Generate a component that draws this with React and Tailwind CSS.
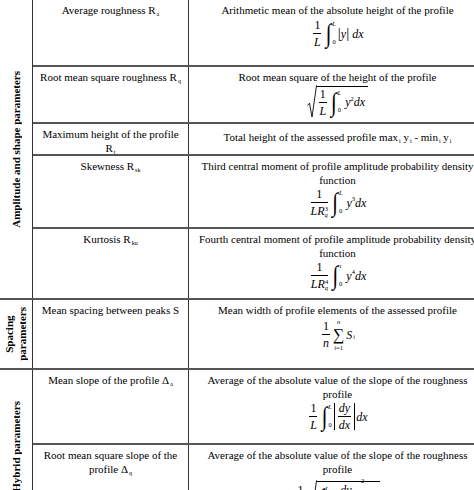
import React from 'react';

const serif = "font-['Liberation_Serif','Times_New_Roman',serif]";

function Sub({children}) {
    return <sub className="text-[6px] relative top-[2px] ml-[1px]">{children}</sub>;
}

function Frac({num, den}) {
    return (
        <span className="inline-flex flex-col items-center leading-none mx-[2px]">
            <span className="px-[1px] pb-[2px] text-[12px] not-italic">{num}</span>
            <span className="border-t border-black w-full text-center pt-[2px] text-[12px]">{den}</span>
        </span>
    );
}

function Int({lo = '0', hi = 'L'}) {
    return (
        <span className="inline-flex items-center mx-[2px]">
            <span className="text-[21px] leading-none italic scale-y-125 inline-block">∫</span>
            <span className="inline-flex flex-col justify-between h-[25px] text-[6.5px] leading-none ml-[1px] not-italic">
                <i>{hi}</i>
                <span className="pb-[1px]">{lo}</span>
            </span>
        </span>
    );
}

function Sqrt({children, h = 30}) {
    return (
        <span className="inline-flex items-stretch">
            <svg width="10" height={h} viewBox={`0 0 10 ${h}`} className="shrink-0">
                <path d={`M0.5 ${h * 0.62} L2.5 ${h * 0.55} L5 ${h - 1} L9.5 0.6 L10 0.6`} fill="none" stroke="black" strokeWidth="0.9"/>
            </svg>
            <span className="border-t border-black inline-flex items-center pr-[3px] mt-[0.5px]">{children}</span>
        </span>
    );
}

function Formula({children, className = ''}) {
    return <div className={`flex items-center justify-center italic text-[12px] ${className}`}>{children}</div>;
}

function Row({first, h, left, children}) {
    return (
        <div className={`flex ${first ? '' : 'border-t-2 border-[#555]'}`} style={{height: h}}>
            <div className="w-[156px] shrink-0 border-r border-[#333] text-center px-1 pt-[3px]">{left}</div>
            <div className="flex-1 text-center px-1 pt-[3px]">{children}</div>
        </div>
    );
}

function Group({label, first, children}) {
    return (
        <div className={`flex ${first ? '' : 'border-t-2 border-[#555]'}`}>
            <div className="w-[33px] shrink-0 border-r border-[#333] flex items-center justify-center">
                <div className="[writing-mode:vertical-rl] rotate-180 font-bold text-[11px] leading-[13px] text-center whitespace-nowrap">
                    {label}
                </div>
            </div>
            <div className="flex-1 flex flex-col">{children}</div>
        </div>
    );
}

export default function App() {
    return (
        <div className={`w-[474px] h-[490px] overflow-hidden bg-white text-black ${serif}`}>
            <div className="w-[486px] text-[11px] leading-[14px]">
                <Group first label="Amplitude and shape parameters">
                    <Row first h={65} left={<>Average roughness R<Sub>a</Sub></>}>
                        <div>Arithmetic mean of the absolute height of the profile</div>
                        <Formula className="mt-[2px]">
                            <Frac num="1" den={<i>L</i>}/>
                            <Int/>
                            <span className="not-italic text-[15px] leading-none">|</span><i>y</i><span className="not-italic text-[15px] leading-none">|</span>
                            <i className="ml-[3px]">dx</i>
                        </Formula>
                    </Row>
                    <Row h={57} left={<>Root mean square roughness R<Sub>q</Sub></>}>
                        <div>Root mean square of the height of the profile</div>
                        <Formula className="mt-[1px]">
                            <Sqrt h={33}>
                                <Frac num="1" den={<i>L</i>}/>
                                <Int/>
                                <i className="ml-[2px]">y</i><sup className="text-[6.5px] not-italic">2</sup><i>dx</i>
                            </Sqrt>
                        </Formula>
                    </Row>
                    <Row h={32} left={<>Maximum height of the profile<br/>R<Sub>t</Sub></>}>
                        <div className="h-full flex items-center justify-center -mt-[3px] pb-[1px]">
                            <span>Total height of the assessed profile max<Sub>i</Sub> y<Sub>i</Sub> - min<Sub>i</Sub> y<Sub>i</Sub></span>
                        </div>
                    </Row>
                    <Row h={73} left={<>Skewness R<Sub>sk</Sub></>}>
                        <div className="whitespace-nowrap">Third central moment of profile amplitude probability density</div>
                        <div>function</div>
                        <Formula className="mt-[1px]">
                            <Frac num="1" den={<i>LR<sub className="text-[6.5px] relative">q</sub><sup className="text-[6.5px] not-italic -ml-[3px] relative -top-[4px]">3</sup></i>}/>
                            <Int/>
                            <i className="ml-[2px]">y</i><sup className="text-[6.5px] not-italic">3</sup><i>dx</i>
                        </Formula>
                    </Row>
                    <Row h={71} left={<>Kurtosis R<Sub>ku</Sub></>}>
                        <div className="whitespace-nowrap">Fourth central moment of profile amplitude probability density</div>
                        <div>function</div>
                        <Formula className="mt-[1px]">
                            <Frac num="1" den={<i>LR<sub className="text-[6.5px] relative">q</sub><sup className="text-[6.5px] not-italic -ml-[3px] relative -top-[4px]">4</sup></i>}/>
                            <Int hi="ι"/>
                            <i className="ml-[2px]">y</i><sup className="text-[6.5px] not-italic">4</sup><i>dx</i>
                        </Formula>
                    </Row>
                </Group>
                <Group label={<>Spacing<br/>parameters</>}>
                    <Row first h={68} left="Mean spacing between peaks S">
                        <div>Mean width of profile elements of the assessed profile</div>
                        <Formula className="mt-[1px]">
                            <Frac num="1" den={<i>n</i>}/>
                            <span className="inline-flex flex-col items-center mx-[1px]">
                                <i className="text-[6.5px] leading-[7px] block mb-[3px]">n</i>
                                <span className="not-italic text-[16px] leading-[14px] h-[14px] block overflow-visible">∑</span>
                                <span className="text-[6.5px] leading-[7px] block not-italic mt-[2px]"><i>i</i>=1</span>
                            </span>
                            <i className="ml-[1px]">S</i><Sub><i>i</i></Sub>
                        </Formula>
                    </Row>
                </Group>
                <Group label="Hybrid parameters">
                    <Row first h={73} left={<>Mean slope of the profile Δ<Sub>a</Sub></>}>
                        <div>Average of the absolute value of the slope of the roughness profile</div>
                        <Formula className="mt-[1px]">
                            <Frac num="1" den={<i>L</i>}/>
                            <Int/>
                            <span className="border-l border-r border-black px-[1px] h-[27px] inline-flex items-center">
                                <Frac num={<i>dy</i>} den={<i>dx</i>}/>
                            </span>
                            <i className="ml-[1px]">dx</i>
                        </Formula>
                    </Row>
                    <Row h={80} left={<>Root mean square slope of the<br/>profile Δ<Sub>q</Sub></>}>
                        <div>Average of the absolute value of the slope of the roughness profile</div>
                        <Formula className="mt-[4px]">
                            <Frac num="1" den={<i>L</i>}/>
                            <Sqrt h={36}>
                                <Int/>
                                <span className="not-italic text-[19px] leading-none">(</span>
                                <Frac num={<i>dy</i>} den={<i>dx</i>}/>
                                <span className="not-italic text-[19px] leading-none">)</span>
                                <sup className="text-[6.5px] not-italic self-start mt-[3px]">2</sup>
                                <i className="ml-[2px]">dx</i>
                            </Sqrt>
                        </Formula>
                    </Row>
                </Group>
            </div>
        </div>
    );
}
